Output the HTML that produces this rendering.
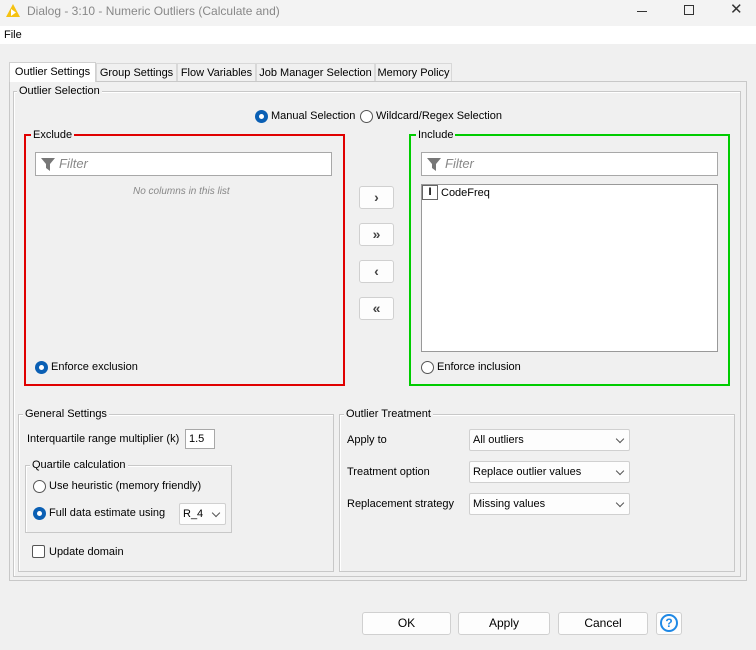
<!DOCTYPE html>
<html><head><style>
*{box-sizing:border-box}
body{margin:0;width:756px;height:650px;background:#f0f0f0;font-family:"Liberation Sans",sans-serif;font-size:11px;line-height:17px;color:#000;position:relative;overflow:hidden}
.a{position:absolute;white-space:nowrap}
.grp{position:absolute;border:1px solid #c8c8c8;box-shadow:inset 1px 1px 0 #fff}
.lbl{position:absolute;background:#f0f0f0;padding:0 2px;top:-8px;left:4px;line-height:15px;white-space:nowrap}
.inp{position:absolute;background:#fff;border:1px solid #a8a8a8}
.btn{position:absolute;background:#fdfdfd;border:1px solid #d0d0d0;border-radius:3px;text-align:center;font-size:12px}
.rad{position:absolute;width:13px;height:13px;border:1px solid #555;border-radius:50%;background:#fff}
.rad.on{border:none;background:#0a5fb4}
.rad.on:after{content:"";position:absolute;left:4px;top:4px;width:5px;height:5px;border-radius:50%;background:#fff}
.cb{position:absolute;width:13px;height:13px;border:1px solid #555;border-radius:2px;background:#fff}
.sel{position:absolute;background:#fdfdfd;border:1px solid #d0d0d0;border-radius:2px;padding-left:3px;line-height:20px}
.sel:after{content:"";position:absolute;right:6px;top:6px;width:5px;height:5px;border-right:1px solid #555;border-bottom:1px solid #555;transform:rotate(45deg)}
.tab{position:absolute;top:63px;height:18px;border:1px solid #d8d8d8;border-bottom:none;background:#f0f0f0;line-height:18px;text-align:center;white-space:nowrap}
.ch{font-weight:bold;font-size:14px;color:#444;line-height:20px}
</style></head><body>
<div class="a" style="left:0;top:0;width:756px;height:26px;background:#f3f3f3"></div>
<svg class="a" style="left:5px;top:3px" width="16" height="16"><polygon points="8,1 15,14 1,14" fill="#f5c211"/><polygon points="6,6 11,9.5 6,13" fill="#fff"/></svg>
<div class="a" style="left:27px;top:3px;color:#888;font-size:12px">Dialog - 3:10 - Numeric Outliers (Calculate and)</div>
<div class="a" style="left:637px;top:11px;width:10px;height:1px;background:#333"></div>
<div class="a" style="left:684px;top:5px;width:10px;height:10px;border:1px solid #333"></div>
<div class="a" style="left:730px;top:1px;font-size:15px;color:#333">✕</div>
<div class="a" style="left:0;top:26px;width:756px;height:18px;background:#fff"></div>
<div class="a" style="left:4px;top:27px">File</div>

<div class="tab" style="left:9px;top:62px;width:87px;height:20px;background:#fff;border-color:#d0d0d0;z-index:2">Outlier Settings</div>
<div class="tab" style="left:96px;width:81px">Group Settings</div>
<div class="tab" style="left:177px;width:79px">Flow Variables</div>
<div class="tab" style="left:256px;width:119px">Job Manager Selection</div>
<div class="tab" style="left:375px;width:77px">Memory Policy</div>
<div class="a" style="left:9px;top:81px;width:738px;height:500px;border:1px solid #c8c8c8;background:#f0f0f0"></div>

<div class="grp" style="left:13px;top:91px;width:728px;height:486px"><div class="lbl" style="left:3px">Outlier Selection</div></div>
<div class="rad on" style="left:255px;top:110px"></div><div class="a" style="left:271px;top:108px">Manual Selection</div>
<div class="rad" style="left:360px;top:110px"></div><div class="a" style="left:376px;top:108px">Wildcard/Regex Selection</div>

<div class="a" style="left:24px;top:134px;width:321px;height:252px;border:2px solid #e00000"><div class="lbl" style="left:5px;top:-8px">Exclude</div></div>
<div class="inp" style="left:35px;top:152px;width:297px;height:24px"></div>
<svg class="a" style="left:40px;top:156px" width="16" height="16"><path d="M1 2H15L10 8V15L6 12V8Z" fill="#777"/></svg>
<div class="a" style="left:59px;top:155px;color:#888;font-style:italic;font-size:13px">Filter</div>
<div class="a" style="left:133px;top:183px;color:#888;font-style:italic;font-size:10px">No columns in this list</div>
<div class="rad on" style="left:35px;top:361px"></div><div class="a" style="left:51px;top:359px">Enforce exclusion</div>

<div class="btn ch" style="left:359px;top:186px;width:35px;height:23px">&#x203A;</div>
<div class="btn ch" style="left:359px;top:223px;width:35px;height:23px">&raquo;</div>
<div class="btn ch" style="left:359px;top:260px;width:35px;height:23px">&#x2039;</div>
<div class="btn ch" style="left:359px;top:297px;width:35px;height:23px">&laquo;</div>

<div class="a" style="left:409px;top:134px;width:321px;height:252px;border:2px solid #00cc00"><div class="lbl" style="left:5px;top:-8px">Include</div></div>
<div class="inp" style="left:421px;top:152px;width:297px;height:24px"></div>
<svg class="a" style="left:426px;top:156px" width="16" height="16"><path d="M1 2H15L10 8V15L6 12V8Z" fill="#777"/></svg>
<div class="a" style="left:445px;top:155px;color:#888;font-style:italic;font-size:13px">Filter</div>
<div class="inp" style="left:421px;top:184px;width:297px;height:168px;border-color:#999"></div>
<div class="a" style="left:422px;top:185px;width:16px;height:15px;border:1px solid #666;background:#fff;text-align:center;font-weight:bold;line-height:13px">I</div>
<div class="a" style="left:441px;top:185px">CodeFreq</div>
<div class="rad" style="left:421px;top:361px"></div><div class="a" style="left:437px;top:359px">Enforce inclusion</div>

<div class="grp" style="left:18px;top:414px;width:316px;height:158px"><div class="lbl" style="left:4px">General Settings</div></div>
<div class="a" style="left:27px;top:431px">Interquartile range multiplier (k)</div>
<div class="inp" style="left:185px;top:429px;width:30px;height:20px;padding:1px 3px">1.5</div>
<div class="grp" style="left:25px;top:465px;width:207px;height:68px"><div class="lbl" style="left:4px">Quartile calculation</div></div>
<div class="rad" style="left:33px;top:480px"></div><div class="a" style="left:49px;top:478px">Use heuristic (memory friendly)</div>
<div class="rad on" style="left:33px;top:507px"></div><div class="a" style="left:49px;top:505px">Full data estimate using</div>
<div class="sel" style="left:179px;top:503px;width:47px;height:22px">R_4</div>
<div class="cb" style="left:32px;top:545px"></div><div class="a" style="left:49px;top:544px">Update domain</div>

<div class="grp" style="left:339px;top:414px;width:396px;height:158px"><div class="lbl" style="left:4px">Outlier Treatment</div></div>
<div class="a" style="left:347px;top:432px">Apply to</div>
<div class="sel" style="left:469px;top:429px;width:161px;height:22px">All outliers</div>
<div class="a" style="left:347px;top:464px">Treatment option</div>
<div class="sel" style="left:469px;top:461px;width:161px;height:22px">Replace outlier values</div>
<div class="a" style="left:347px;top:496px">Replacement strategy</div>
<div class="sel" style="left:469px;top:493px;width:161px;height:22px">Missing values</div>

<div class="btn" style="left:362px;top:612px;width:89px;height:23px;line-height:21px">OK</div>
<div class="btn" style="left:458px;top:612px;width:92px;height:23px;line-height:21px">Apply</div>
<div class="btn" style="left:558px;top:612px;width:90px;height:23px;line-height:21px">Cancel</div>
<div class="btn" style="left:656px;top:612px;width:26px;height:23px"></div>
<div class="a" style="left:660px;top:614px;width:18px;height:18px;border:2px solid #1e88e5;border-radius:50%;color:#1e88e5;text-align:center;font-size:12px;line-height:14px;font-weight:bold">?</div>
</body></html>
